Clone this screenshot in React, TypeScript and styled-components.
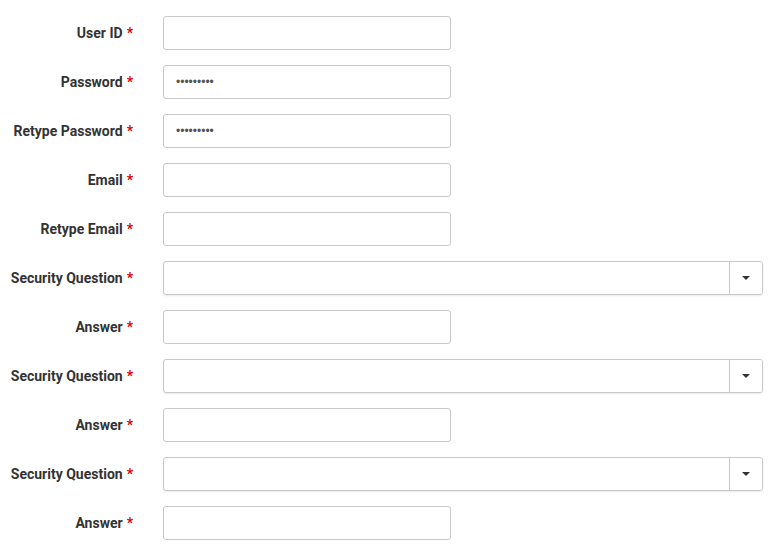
import { Fragment } from "react";
import styled, { createGlobalStyle } from "styled-components";

const GlobalStyle = createGlobalStyle`
  html, body {
    margin: 0;
    padding: 0;
    background: #fff;
  }
  body {
    font-family: Roboto, "Liberation Sans", Arial, sans-serif;
  }
`;

const Form = styled.form`
  display: grid;
  grid-template-columns: 133px 1fr;
  column-gap: 30px;
  row-gap: 15px;
  padding-top: 16px;
  align-items: center;
`;

const Label = styled.label`
  text-align: right;
  font-size: 14px;
  font-weight: 700;
  color: #333;
  white-space: nowrap;
`;

const Required = styled.span`
  color: #e00000;
  margin-left: 4px;
`;

const TextInput = styled.input`
  box-sizing: border-box;
  width: 288px;
  height: 34px;
  border: 1px solid #c8c8c8;
  border-radius: 3px;
  padding: 0 12px;
  font-family: "Liberation Sans", Arial, sans-serif;
  font-size: 12px;
  color: #555;
  background: #fff;
  outline: none;
`;

const SelectBox = styled.div`
  box-sizing: border-box;
  width: 600px;
  height: 34px;
  display: flex;
  border: 1px solid #c8c8c8;
  border-radius: 3px;
  box-shadow: 0 1px 2px rgba(0, 0, 0, 0.08);
  background: #fff;
  overflow: hidden;
`;

const NativeSelect = styled.select`
  flex: 1;
  appearance: none;
  border: none;
  background: transparent;
  padding: 0 12px;
  font-family: Roboto, "Liberation Sans", Arial, sans-serif;
  font-size: 13px;
  color: #333;
  outline: none;
`;

const CaretButton = styled.button`
  width: 33px;
  border: none;
  border-left: 1px solid #c8c8c8;
  background: #fff;
  display: grid;
  place-items: center;
  padding: 0;
  cursor: pointer;
`;

const Caret = styled.span`
  width: 0;
  height: 0;
  border-left: 4px solid transparent;
  border-right: 4px solid transparent;
  border-top: 4px solid #333;
`;

type Row = { label: string; kind: "text" | "password" | "select" };

const rows: Row[] = [
  { label: "User ID", kind: "text" },
  { label: "Password", kind: "password" },
  { label: "Retype Password", kind: "password" },
  { label: "Email", kind: "text" },
  { label: "Retype Email", kind: "text" },
  { label: "Security Question", kind: "select" },
  { label: "Answer", kind: "text" },
  { label: "Security Question", kind: "select" },
  { label: "Answer", kind: "text" },
  { label: "Security Question", kind: "select" },
  { label: "Answer", kind: "text" },
];

const Field = ({ row, id }: { row: Row; id: string }) => {
  if (row.kind === "select") {
    return (
      <SelectBox>
        <NativeSelect id={id} defaultValue="">
          <option value=""></option>
        </NativeSelect>
        <CaretButton type="button" aria-label="Open">
          <Caret />
        </CaretButton>
      </SelectBox>
    );
  }
  if (row.kind === "password") {
    return <TextInput id={id} type="password" defaultValue="123456789" />;
  }
  return <TextInput id={id} type="text" />;
};

const App = () => {
  return (
    <>
      <GlobalStyle />
      <Form>
        {rows.map((row, i) => (
          <Fragment key={i}>
            <Label htmlFor={`f${i}`}>
              {row.label}
              <Required>*</Required>
            </Label>
            <Field row={row} id={`f${i}`} />
          </Fragment>
        ))}
      </Form>
    </>
  );
};

export default App;
